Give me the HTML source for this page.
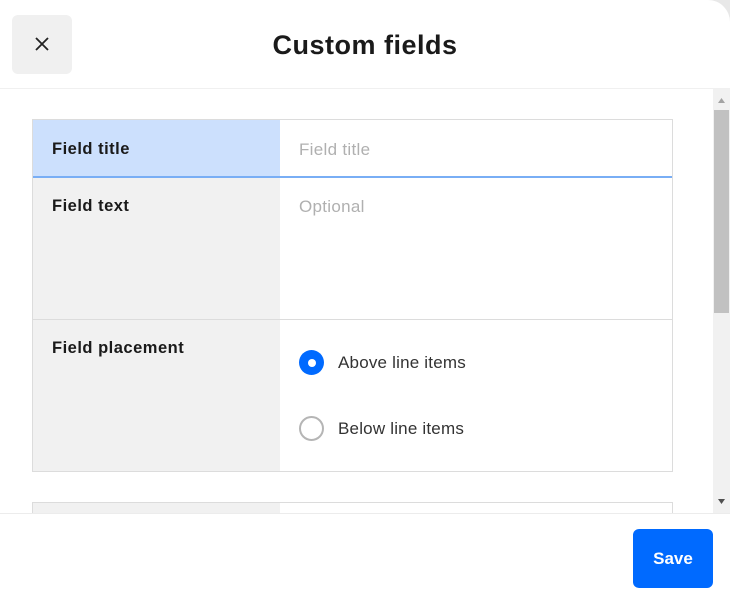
<!DOCTYPE html>
<html><head><style>
*{box-sizing:border-box;margin:0;padding:0}
body{width:730px;height:599px;background:#e8e8e8;font-family:"Liberation Sans",sans-serif;overflow:hidden;position:relative}
.modal{position:absolute;left:0;top:0;width:730px;height:599px;background:#fff;border-top-right-radius:22px;overflow:hidden}
.close{position:absolute;left:12px;top:15px;width:60px;height:59px;background:#f0f0f0;border-radius:6px}
h1{position:absolute;left:0;width:730px;top:30px;text-align:center;font-size:27px;font-weight:700;color:#1a1a1a;letter-spacing:0.5px}
.hdiv{position:absolute;left:0;top:88px;width:730px;height:1px;background:#f0f0f0}
.sb{position:absolute;left:713px;top:89px;width:17px;height:425px;background:#f1f1f1}
.thumb{position:absolute;left:714px;top:110px;width:15px;height:203px;background:#c1c1c1}
.tbl{position:absolute;left:32px;width:641px;border:1px solid #dcdcdc}
.row{display:flex;border-top:1px solid #dcdcdc}
.row:first-child{border-top:none}
.lab{width:247px;background:#f1f1f1;font-size:16.5px;letter-spacing:0.5px;font-weight:700;color:#1a1a1a;padding:20px 0 0 19px}
.val{flex:1;font-size:17px;letter-spacing:0.3px;color:#b0b0b0;padding:20px 0 0 19px}
.radio{display:flex;align-items:center;font-size:17px;letter-spacing:0.2px;color:#333;position:absolute;left:299px}
.rb{width:25px;height:25px;border-radius:50%;margin-right:14px}
.foot{position:absolute;left:0;top:513px;width:730px;height:86px;background:#fff;border-top:1px solid #ececec}
.save{position:absolute;left:633px;top:529px;width:80px;height:59px;background:#006aff;border-radius:6px;color:#fff;font-weight:700;font-size:17px;text-align:center;line-height:59px}
</style></head><body><div class="modal">
<div class="close"><svg width="60" height="59"><path d="M24 23L36 35M36 23L24 35" stroke="#222" stroke-width="1.8"/></svg></div>
<h1>Custom fields</h1>
<div class="hdiv"></div>
<div class="tbl" style="top:119px;height:353px">
 <div class="row" style="height:58px;border-bottom:2px solid #79aef5"><div class="lab" style="background:#cce0fd">Field title</div><div class="val">Field title</div></div>
 <div class="row" style="height:141px;border-top:none"><div class="lab" style="padding-top:19px">Field text</div><div class="val" style="padding-top:19px">Optional</div></div>
 <div class="row" style="height:152px"><div class="lab" style="padding-top:19px">Field placement</div><div class="val"></div></div>
</div>
<div class="radio" style="top:350px"><div class="rb" style="background:#006aff;display:flex;align-items:center;justify-content:center"><div style="width:8px;height:8px;border-radius:50%;background:#fff"></div></div>Above line items</div>
<div class="radio" style="top:416px"><div class="rb" style="border:2px solid #b5b5b5"></div>Below line items</div>
<div class="tbl" style="top:502px;height:40px;display:flex"><div style="width:247px;background:#f1f1f1"></div></div>
<div class="sb"><svg width="17" height="425"><path d="M5 14L8.5 9L12 14Z" fill="#a3a3a3"/><path d="M5 410L8.5 415L12 410Z" fill="#505050"/></svg></div>
<div class="thumb"></div>
<div class="foot"></div>
<div class="save">Save</div>
</div></body></html>
